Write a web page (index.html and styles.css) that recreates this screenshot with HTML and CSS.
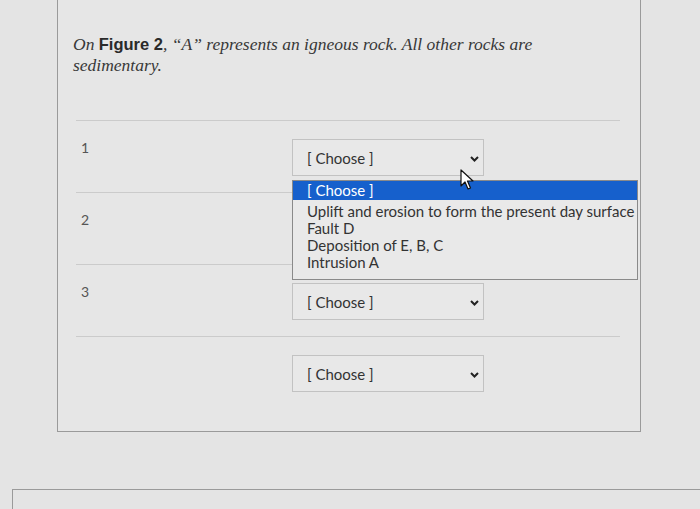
FILE: index.html
```html
<!DOCTYPE html>
<html>
<head>
<meta charset="utf-8">
<link rel="stylesheet" href="styles.css">
</head>
<body>
<div class="card">
  <p class="question"><i>On</i> <b class="fig">Figure 2</b><i>, “A” represents an igneous rock. All other rocks are sedimentary.</i></p>
  <div class="rows">
    <div class="row">
      <div class="label">1</div>
      <div class="select-wrap">
        <div class="select"><span>[ Choose ]</span><svg class="chev" width="9" height="6" viewBox="0 0 9 6"><path d="M1 1 L4.5 4.5 L8 1" fill="none" stroke="#222" stroke-width="2"/></svg></div>
        <div class="list">
          <div class="opt sel">[ Choose ]</div>
          <div class="opt first">Uplift and erosion to form the present day surface</div>
          <div class="opt">Fault D</div>
          <div class="opt">Deposition of E, B, C</div>
          <div class="opt">Intrusion A</div>
        </div>
        <svg class="cursor" width="16" height="22" viewBox="0 0 16 22"><path d="M1 1 L1 17 L5 13 L8 20 L10.5 19 L7.5 12 L13 12 Z" fill="#fff" stroke="#111" stroke-width="1.2" stroke-linejoin="round"/></svg>
      </div>
    </div>
    <div class="row">
      <div class="label">2</div>
      <div class="select-wrap">
        <div class="select"><span>[ Choose ]</span><svg class="chev" width="9" height="6" viewBox="0 0 9 6"><path d="M1 1 L4.5 4.5 L8 1" fill="none" stroke="#222" stroke-width="2"/></svg></div>
      </div>
    </div>
    <div class="row">
      <div class="label">3</div>
      <div class="select-wrap">
        <div class="select"><span>[ Choose ]</span><svg class="chev" width="9" height="6" viewBox="0 0 9 6"><path d="M1 1 L4.5 4.5 L8 1" fill="none" stroke="#222" stroke-width="2"/></svg></div>
      </div>
    </div>
    <div class="row last">
      <div class="label"></div>
      <div class="select-wrap">
        <div class="select"><span>[ Choose ]</span><svg class="chev" width="9" height="6" viewBox="0 0 9 6"><path d="M1 1 L4.5 4.5 L8 1" fill="none" stroke="#222" stroke-width="2"/></svg></div>
      </div>
    </div>
  </div>
</div>
<div class="next"></div>
</body>
</html>
```

FILE: styles.css
```css
html, body {
  margin: 0;
  padding: 0;
  background: #e4e4e4;
  overflow: hidden;
}
body {
  width: 700px;
  height: 509px;
}
.card {
  margin-left: 57px;
  width: 582px;
  height: 431px;
  border: 1px solid #9a9a9a;
  border-top: none;
  box-sizing: content-box;
  background: #e6e6e6;
}
.question {
  margin: 0;
  padding: 34px 60px 0 15px;
  font-family: "Liberation Serif", serif;
  font-size: 17.5px;
  line-height: 21px;
  color: #383838;
}
.question i {
  font-style: italic;
}
.fig {
  font-family: "Liberation Sans", sans-serif;
  font-weight: bold;
  font-size: 16.5px;
  color: #2a2a2a;
}
.rows {
  margin: 44px 20px 0 18px;
  border-top: 1px solid #cbcbcb;
}
.row {
  display: flex;
  align-items: flex-start;
  height: 71px;
  border-bottom: 1px solid #cbcbcb;
}
.row.last {
  border-bottom: none;
}
.label {
  width: 216px;
  padding: 19px 0 0 5px;
  box-sizing: border-box;
  font-family: Lato, sans-serif;
  font-size: 14px;
  line-height: 16px;
  color: #555;
}
.select-wrap {
  position: relative;
  margin-top: 18px;
}
.select {
  width: 192px;
  height: 37px;
  box-sizing: border-box;
  border: 1px solid #c2c2c2;
  display: flex;
  align-items: center;
  justify-content: space-between;
  padding: 0 4px 0 14px;
  font-family: Lato, sans-serif;
  font-size: 15px;
  color: #333;
  background: #e8e8e8;
}
.chev {
  margin-top: 3px;
}
.list {
  position: absolute;
  top: 41px;
  left: 0;
  width: 346px;
  height: 100px;
  box-sizing: border-box;
  border: 1px solid #8a8a8a;
  background: #e9e9e9;
  font-family: Lato, sans-serif;
  font-size: 15px;
  color: #333;
  z-index: 2;
}
.opt {
  padding-left: 14px;
  line-height: 17px;
  white-space: nowrap;
}
.opt.sel {
  background: #1660cc;
  color: #fff;
  line-height: 19px;
}
.opt.first {
  margin-top: 3px;
}
.cursor {
  position: absolute;
  left: 168px;
  top: 30px;
  z-index: 3;
}
.next {
  margin: 57px 0 0 12px;
  height: 40px;
  border: 1px solid #9a9a9a;
  border-right: none;
  border-bottom: none;
}
```
